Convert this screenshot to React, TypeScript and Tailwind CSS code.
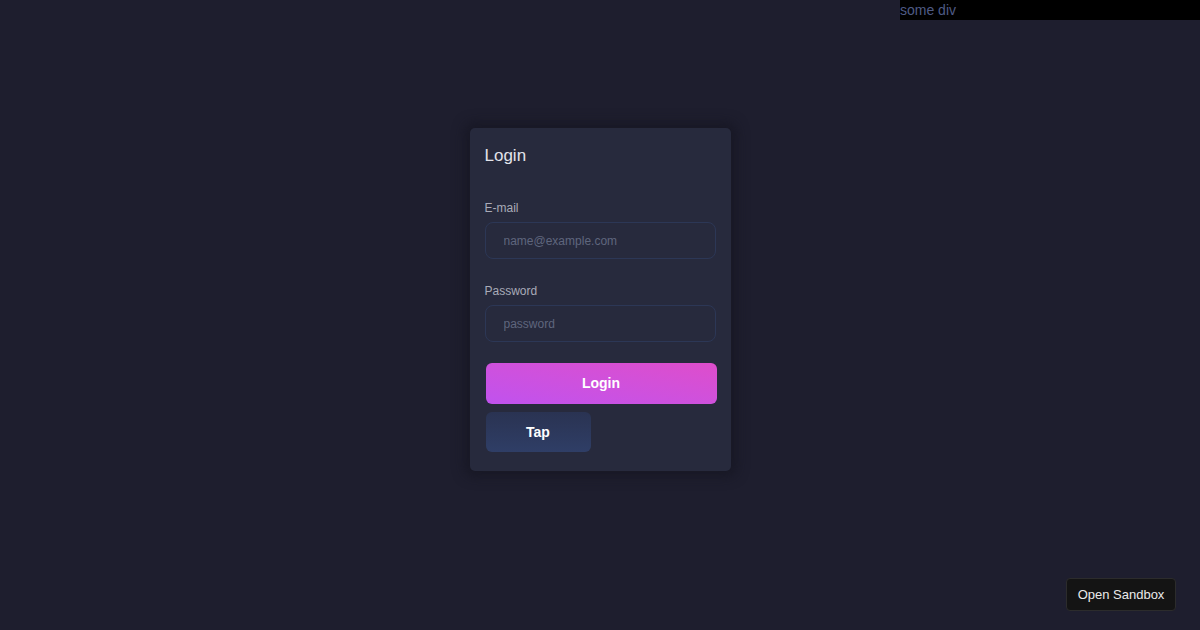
export default function App() {
  return (
    <div
      className="relative flex min-h-screen justify-center bg-[#1e1e2e] pt-[128px]"
      style={{ fontFamily: '"Liberation Sans", Arial, sans-serif' }}
    >
      <div className="absolute right-0 top-0 h-[20px] w-[300px] bg-black text-[14px] leading-[20px] text-[#4f5b85]">
        some div
      </div>

      <div className="flex h-[343px] w-[261px] flex-col rounded-[5px] bg-[#272a3d] px-[15px] pb-[19px] pt-[16px] shadow-[0_0_12px_6px_rgba(20,20,32,0.6)]">
        <h1 className="h-[24px] text-[17px] leading-[24px] text-[#e2e3ea]">Login</h1>

        <label className="mt-[32px] text-[12px] leading-[16px] text-[#a9abb8]">E-mail</label>
        <input
          type="email"
          placeholder="name@example.com"
          className="mt-[6px] h-[37px] w-full rounded-[8px] border border-[#2c3756] bg-transparent pl-[18px] text-[12px] text-[#d0d0d8] outline-none placeholder:text-[#5f667d]"
        />

        <label className="mt-[24px] text-[12px] leading-[16px] text-[#a9abb8]">Password</label>
        <input
          type="password"
          placeholder="password"
          className="mt-[6px] h-[37px] w-full rounded-[8px] border border-[#2c3756] bg-transparent pl-[18px] text-[12px] text-[#d0d0d8] outline-none placeholder:text-[#5f667d]"
        />

        <button className="ml-[1px] mt-[21px] h-[41px] w-[231px] rounded-[6px] bg-gradient-to-tr from-[#c052ee] to-[#de4dcb] text-[14px] font-bold text-white">
          Login
        </button>
        <button className="ml-[1px] mt-[8px] h-[40px] w-[105px] rounded-[6px] bg-gradient-to-b from-[#2a3352] to-[#2f3e66] text-[14px] font-bold text-white">
          Tap
        </button>
      </div>

      <button className="absolute bottom-[19px] right-[24px] h-[33px] w-[110px] rounded-[4px] border border-[#2c2c2c] bg-[#141414] text-[13px] text-[#eaeaea]">
        Open Sandbox
      </button>
    </div>
  )
}
